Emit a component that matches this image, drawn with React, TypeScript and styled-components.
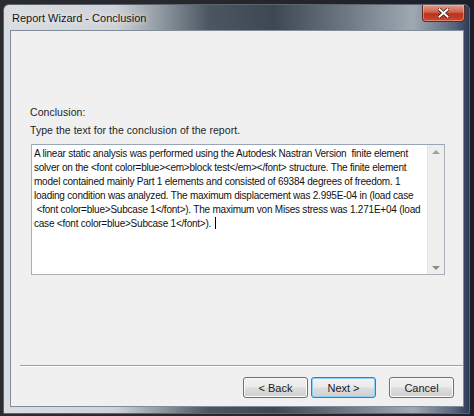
import styled, { createGlobalStyle } from "styled-components";

const GlobalStyle = createGlobalStyle`
  html, body {
    margin: 0;
    padding: 0;
    background: #26282d;
    font-family: "Liberation Sans", Arial, sans-serif;
  }
`;

const Page = styled.div`
  width: 474px;
  height: 416px;
  background: linear-gradient(90deg, #2b2c30 0%, #24262b 60%, #1c1f2a 100%);
  padding: 4px 0 0 3px;
  box-sizing: border-box;
  overflow: hidden;
`;

const Window = styled.div`
  width: 467px;
  height: 410px;
  box-sizing: border-box;
  border-radius: 6px 6px 0 0;
  border: 1px solid #5b6470;
  background: linear-gradient(
    90deg,
    #dadde1 0%,
    #cfd3d8 24%,
    #8e969f 34%,
    #4c5660 44%,
    #3e4852 58%,
    #6f7984 74%,
    #a0a8b2 88%,
    #56637a 97%,
    #2d3a5a 100%
  );
  padding: 0 5px 6px 6px;
  display: flex;
  flex-direction: column;
`;

const TitleBar = styled.div`
  height: 25px;
  display: flex;
  justify-content: space-between;
  align-items: flex-start;
`;

const Title = styled.div`
  font-size: 11px;
  color: #151515;
  padding: 7px 0 0 2px;
  text-shadow: 0 0 6px rgba(255, 255, 255, 0.9);
`;

const CloseButton = styled.div`
  width: 43px;
  height: 17px;
  box-sizing: border-box;
  border: 1px solid #5e2a28;
  border-top: none;
  border-radius: 0 0 4px 4px;
  background: linear-gradient(180deg, #e59a88 0%, #d2614b 45%, #b8321c 55%, #c94a2e 100%);
  box-shadow: inset 0 0 0 1px rgba(255, 200, 190, 0.45);
  display: flex;
  align-items: center;
  justify-content: center;
  margin-right: -1px;
`;

const Client = styled.div`
  flex: 1;
  background: #f0f0f0;
  border: 1px solid #7f8c9a;
  display: flex;
  flex-direction: column;
  padding: 75px 0 8px 0;
`;

const Label = styled.div<{ gap?: number }>`
  font-size: 10.5px;
  letter-spacing: 0.05px;
  color: #1e1e1e;
  margin-left: 19px;
  line-height: 13px;
  margin-bottom: ${(p) => p.gap ?? 0}px;
`;

const TextBox = styled.div`
  margin-left: 20px;
  width: 414px;
  height: 131px;
  box-sizing: border-box;
  border: 1px solid #abb0b8;
  border-top-color: #9aa6b6;
  background: #ffffff;
  display: flex;
`;

const TextArea = styled.div`
  flex: 1;
  padding: 2px 2px;
  font-size: 10px;
  line-height: 14px;
  letter-spacing: -0.22px;
  color: #111;
  white-space: pre;
  overflow: hidden;
`;

const Caret = styled.span`
  display: inline-block;
  width: 0;
  height: 12px;
  border-left: 1px solid #000;
  vertical-align: -2px;
  margin-left: 1px;
`;

const ScrollBar = styled.div`
  width: 16px;
  background: #eeeeee;
  border-left: 1px solid #e4e4e4;
  display: flex;
  flex-direction: column;
  justify-content: space-between;
  align-items: center;
  padding: 5px 0 4px;
`;

const Arrow = styled.div<{ down?: boolean }>`
  width: 0;
  height: 0;
  border-left: 4px solid transparent;
  border-right: 4px solid transparent;
  ${(p) =>
    p.down ? "border-top: 4px solid #8a8a8a;" : "border-bottom: 4px solid #a0a0a0;"}
`;

const Spacer = styled.div`
  flex: 1;
`;

const Separator = styled.div`
  margin-left: 9px;
  height: 0;
  border-top: 1px solid #a0a0a0;
  border-bottom: 1px solid #ffffff;
`;

const ButtonRow = styled.div`
  display: flex;
  justify-content: flex-end;
  padding: 10px 9px 0 0;
`;

const Button = styled.div<{ primary?: boolean; gap?: number }>`
  width: 65px;
  height: 21px;
  box-sizing: border-box;
  margin-left: ${(p) => p.gap ?? 0}px;
  border: 1px solid ${(p) => (p.primary ? "#3c7fb1" : "#707070")};
  border-radius: 3px;
  background: linear-gradient(180deg, #f2f2f2 0%, #ebebeb 48%, #dddddd 52%, #cfcfcf 100%);
  box-shadow: inset 0 0 0 1px ${(p) => (p.primary ? "#8fd1f6" : "#fbfbfb")};
  display: flex;
  align-items: center;
  justify-content: center;
  font-size: 11px;
  color: #1b1b1b;
`;

const lines = [
  "A linear static analysis was performed using the Autodesk Nastran Version  finite element",
  "solver on the <font color=blue><em>block test</em></font> structure. The finite element",
  "model contained mainly Part 1 elements and consisted of 69384 degrees of freedom. 1",
  "loading condition was analyzed. The maximum displacement was 2.995E-04 in (load case",
  " <font color=blue>Subcase 1</font>). The maximum von Mises stress was 1.271E+04 (load",
  "case <font color=blue>Subcase 1</font>). ",
];

export default function App() {
  return (
    <>
      <GlobalStyle />
      <Page>
        <Window>
          <TitleBar>
            <Title>Report Wizard - Conclusion</Title>
            <CloseButton>
              <svg width="11" height="10" viewBox="0 0 11 10">
                <path
                  d="M1.5 1.5 L9.5 8.5 M9.5 1.5 L1.5 8.5"
                  stroke="#3a1410"
                  strokeWidth="3.4"
                  strokeLinecap="square"
                />
                <path
                  d="M1.5 1.5 L9.5 8.5 M9.5 1.5 L1.5 8.5"
                  stroke="#ffffff"
                  strokeWidth="2"
                  strokeLinecap="square"
                />
              </svg>
            </CloseButton>
          </TitleBar>
          <Client>
            <Label gap={5}>Conclusion:</Label>
            <Label gap={7}>Type the text for the conclusion of the report.</Label>
            <TextBox>
              <TextArea>
                {lines.join("\n")}
                <Caret />
              </TextArea>
              <ScrollBar>
                <Arrow />
                <Arrow down />
              </ScrollBar>
            </TextBox>
            <Spacer />
            <Separator />
            <ButtonRow>
              <Button>&lt; Back</Button>
              <Button primary gap={3}>
                Next &gt;
              </Button>
              <Button gap={13}>Cancel</Button>
            </ButtonRow>
          </Client>
        </Window>
      </Page>
    </>
  );
}
